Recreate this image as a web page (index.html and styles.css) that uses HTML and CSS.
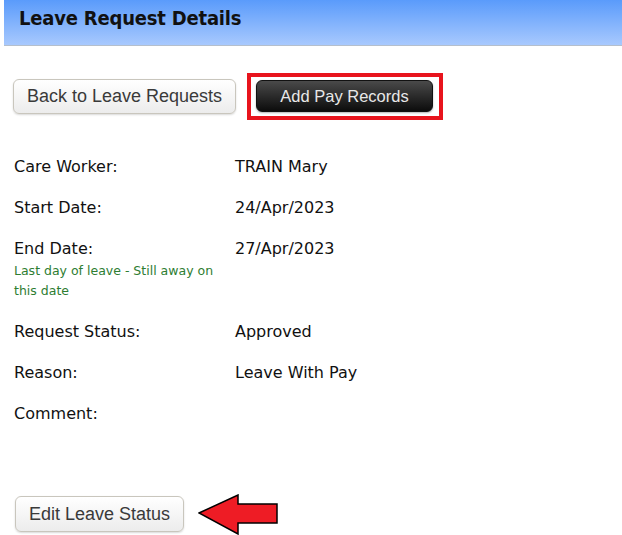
FILE: index.html
```html
<!DOCTYPE html>
<html>
<head>
<meta charset="utf-8">
<link rel="stylesheet" href="styles.css">
</head>
<body>
<div class="page">
  <div class="header"><h1 class="title">Leave Request Details</h1></div>
  <div class="actions">
    <button class="btn btn-light btn-back">Back to Leave Requests</button>
    <div class="highlight"><button class="btn btn-dark">Add Pay Records</button></div>
  </div>
  <div class="details">
    <div class="row"><div class="label">Care Worker:</div><div class="value">TRAIN Mary</div></div>
    <div class="row"><div class="label">Start Date:</div><div class="value">24/Apr/2023</div></div>
    <div class="row"><div class="label">End Date:<div class="note">Last day of leave - Still away on this date</div></div><div class="value">27/Apr/2023</div></div>
    <div class="row"><div class="label">Request Status:</div><div class="value">Approved</div></div>
    <div class="row"><div class="label">Reason:</div><div class="value">Leave With Pay</div></div>
    <div class="row"><div class="label">Comment:</div><div class="value"></div></div>
  </div>
  <div class="footer">
    <button class="btn btn-light btn-edit">Edit Leave Status</button>
    <svg class="arrow" width="82" height="42" viewBox="0 0 82 42">
      <polygon points="1,19 40,1 40,10 79,10 79,29 40,29 40,40" fill="#ee1c25" stroke="#000" stroke-width="1.5" stroke-linejoin="miter"/>
    </svg>
  </div>
</div>
</body>
</html>
```
FILE: styles.css
```css
* { box-sizing: border-box; }
html, body { margin: 0; padding: 0; background: #fff; }
.page { width: 622px; height: 535px; overflow: hidden; font-family: "DejaVu Sans", sans-serif; }
.header {
  margin-left: 4px;
  height: 46px;
  background: linear-gradient(#5a9bfb, #a8c9fe);
  border-bottom: 1px solid #b5bfcc;
  padding: 6px 0 0 15px;
}
.title {
  margin: 0;
  font-family: "DejaVu Sans Condensed", "DejaVu Sans", sans-serif;
  font-stretch: condensed;
  font-size: 20px;
  font-weight: bold;
  color: #111;
  line-height: 24px;
  letter-spacing: -0.2px;
}
.actions { display: flex; align-items: center; padding: 27px 0 0 13px; gap: 11px; }
.btn {
  font-family: "Liberation Sans", Arial, sans-serif;
  font-size: 18px;
  border-radius: 6px;
  cursor: pointer;
  padding: 0;
}
.btn-light {
  background: linear-gradient(#ffffff, #ececec);
  border: 1px solid #c9c6bd;
  color: #3a3a3a;
  box-shadow: 0 1px 2px rgba(0,0,0,0.15);
}
.btn-back { height: 35px; width: 223px; }
.highlight { border: 4px solid #e8141d; padding: 3px 6px 4px 5px; }
.btn-dark {
  background: linear-gradient(#4a4a4a, #0c0c0c);
  border: 1px solid #111;
  color: #e8e8e8;
  height: 32px;
  width: 177px;
  font-size: 16.5px;
  box-shadow: 0 1px 2px rgba(0,0,0,0.3);
}
.details { padding: 37px 0 0 14px; font-size: 16px; color: #111; line-height: 20px; }
.row { display: flex; padding-bottom: 21px; }
.label { width: 221px; }
.note { color: #2e7d32; font-size: 12.5px; line-height: 20px; margin-top: 2px; width: 200px; }
.footer { display: flex; align-items: center; padding: 47px 0 0 15px; gap: 14px; }
.btn-edit { height: 36px; width: 169px; }
.arrow { display: block; margin-top: 2px; }
```
